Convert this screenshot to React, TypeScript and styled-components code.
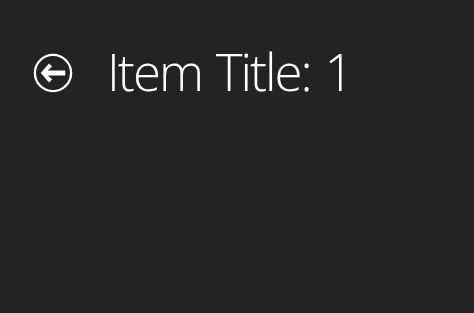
import React from "react";
import styled, { createGlobalStyle } from "styled-components";

const Global = createGlobalStyle`
  html, body { margin: 0; padding: 0; background: #232323; }
  body { width: 474px; height: 313px; overflow: hidden; }
  #root { width: 474px; height: 313px; }
`;

const Page = styled.div`
  width: 474px;
  height: 313px;
  background: #232323;
  display: flex;
  flex-direction: column;
  box-sizing: border-box;
  padding: 49px 0 0 33px;
`;

const Header = styled.header`
  display: flex;
  align-items: center;
  gap: 34px;
`;

const BackButton = styled.button`
  width: 40px;
  height: 40px;
  padding: 0;
  border: none;
  background: transparent;
  display: flex;
  align-items: center;
  justify-content: center;
  cursor: pointer;
  flex: none;
`;

const Title = styled.h1`
  margin: -3px 0 0 0;
  font-family: "Open Sans", "Segoe UI", sans-serif;
  font-weight: 300;
  font-size: 51px;
  line-height: 1;
  color: #ffffff;
  letter-spacing: -2px;
  word-spacing: 2.5px;
  white-space: nowrap;
`;

export default function App() {
  return (
    <>
      <Global />
      <Page>
        <Header>
          <BackButton aria-label="Back">
            <svg width="40" height="40" viewBox="0 0 40 40">
              <circle cx="20" cy="20" r="18.1" fill="none" stroke="#fff" strokeWidth="2.3" />
              <path
                d="M7.7 20 L16 10.5 L19.2 13.5 L14.8 17.6 L32.3 17.6 L32.3 22.4 L14.8 22.4 L19.2 26.5 L16 29.5 Z"
                fill="#fff"
              />
            </svg>
          </BackButton>
          <Title>Item Title: 1</Title>
        </Header>
      </Page>
    </>
  );
}
